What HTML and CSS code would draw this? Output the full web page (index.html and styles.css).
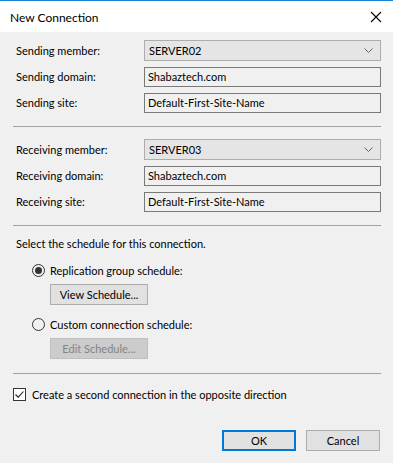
FILE: index.html
```
<!DOCTYPE html>
<html lang="en">
  <head>
    <meta charset="UTF-8" />
    <meta name="viewport" content="width=device-width, initial-scale=1.0" />
    <title>New Connection</title>

    <link rel="stylesheet" href="styles.css">
  </head>
  <body>
    <div class="window">
      <div class="titlebar">
        <span class="title">New Connection</span>
        <svg class="close" width="12" height="12" viewBox="0 0 12 12">
          <path d="M1 1 L11 11 M11 1 L1 11" stroke="#000" stroke-width="1.1" fill="none" />
        </svg>
      </div>

      <div class="content">
        <div class="fields first">
          <label class="label">Sending member:</label>
          <div class="combo">
            <span>SERVER02</span>
            <svg width="9" height="5" viewBox="0 0 9 5"><path d="M0.5 0.5 L4.5 4.5 L8.5 0.5" stroke="#606060" fill="none" /></svg>
          </div>
          <label class="label">Sending domain:</label>
          <div class="textbox">Shabaztech.com</div>
          <label class="label">Sending site:</label>
          <div class="textbox">Default-First-Site-Name</div>
        </div>

        <hr class="sep" />

        <div class="fields">
          <label class="label">Receiving member:</label>
          <div class="combo">
            <span>SERVER03</span>
            <svg width="9" height="5" viewBox="0 0 9 5"><path d="M0.5 0.5 L4.5 4.5 L8.5 0.5" stroke="#606060" fill="none" /></svg>
          </div>
          <label class="label">Receiving domain:</label>
          <div class="textbox">Shabaztech.com</div>
          <label class="label">Receiving site:</label>
          <div class="textbox">Default-First-Site-Name</div>
        </div>

        <hr class="sep" />

        <p class="prompt">Select the schedule for this connection.</p>

        <div class="schedule">
          <div class="option">
            <span class="radio checked"></span>
            <span>Replication group schedule:</span>
          </div>
          <button class="btn wide">View Schedule...</button>

          <div class="option">
            <span class="radio"></span>
            <span>Custom connection schedule:</span>
          </div>
          <button class="btn wide" disabled>Edit Schedule...</button>
        </div>

        <hr class="sep bottom" />

        <div class="check-row">
          <span class="checkbox">
            <svg width="11" height="11" viewBox="0 0 11 11"><path d="M1.5 5.5 L4.2 8.2 L9.5 2.5" stroke="#222" stroke-width="1.1" fill="none" /></svg>
          </span>
          <span>Create a second connection in the opposite direction</span>
        </div>

        <div class="actions">
          <button class="btn default">OK</button>
          <button class="btn">Cancel</button>
        </div>
      </div>
    </div>
  </body>
</html>
```

FILE: styles.css
```
body {
  background: #f0f0f0;
  color: #000;
  font-family: Lato, "Noto Sans", sans-serif;
  font-size: 11px;
  margin: 0;
}

.window {
  border-top: 1px solid #1883d7;
  height: 462px;
  overflow: hidden;
}

.titlebar {
  align-items: center;
  background: #fff;
  display: flex;
  height: 31px;
  justify-content: space-between;
  padding: 0 10px 0 10px;
}

.title {
  font-size: 12px;
  margin-top: 1px;
}

.close {
  margin-right: 1px;
}

.content {
  padding: 0 12px 0 13px;
}

.fields {
  display: grid;
  grid-template-columns: 131px 1fr;
  row-gap: 6px;
  align-items: center;
}

.fields.first {
  margin-top: 8px;
}

.label {
  padding-left: 3px;
  line-height: 16px;
}

.combo {
  align-items: center;
  background: #e5e5e5;
  border: 1px solid #adadad;
  box-sizing: border-box;
  display: flex;
  height: 21px;
  justify-content: space-between;
  padding: 0 7px 0 4px;
}

.textbox {
  background: #f0f0f0;
  border: 1px solid #7a7a7a;
  box-sizing: border-box;
  height: 20px;
  line-height: 18px;
  padding: 0 3px;
}

.sep {
  border: none;
  border-top: 1px solid #a0a0a0;
  margin: 13px 0 12px 0;
}

.sep.bottom {
  margin: 14px 0 0 0;
}

.prompt {
  line-height: 16px;
  margin: -2px 0 0 3px;
}

.schedule {
  display: flex;
  flex-direction: column;
  align-items: flex-start;
  padding-left: 19px;
}

.option {
  align-items: center;
  display: flex;
  gap: 5px;
  height: 16px;
  margin-top: 10px;
}

.option + .btn {
  margin-top: 6px;
  margin-left: 18px;
}

.btn + .option {
  margin-top: 11px;
}

.radio {
  border: 1px solid #333;
  border-radius: 50%;
  box-sizing: border-box;
  display: inline-block;
  height: 13px;
  position: relative;
  width: 13px;
}

.radio.checked::after {
  background: #333;
  border-radius: 50%;
  content: "";
  height: 7px;
  left: 2px;
  position: absolute;
  top: 2px;
  width: 7px;
}

.btn {
  background: #e1e1e1;
  border: 1px solid #adadad;
  box-sizing: border-box;
  color: #000;
  font-family: inherit;
  font-size: 11px;
  height: 21px;
  padding: 0;
  width: 74px;
}

.btn.wide {
  width: 98px;
}

.btn:disabled {
  background: #cccccc;
  border-color: #bfbfbf;
  color: #838383;
}

.btn.default {
  border: 2px solid #0078d7;
}

.check-row {
  align-items: center;
  display: flex;
  gap: 6px;
  height: 16px;
  margin-top: 12px;
}

.checkbox {
  align-items: center;
  background: #fff;
  border: 1px solid #333;
  box-sizing: border-box;
  display: inline-flex;
  height: 13px;
  justify-content: center;
  width: 13px;
}

.actions {
  display: flex;
  gap: 10px;
  justify-content: flex-end;
  margin-top: 28px;
  padding-right: 1px;
}
```
